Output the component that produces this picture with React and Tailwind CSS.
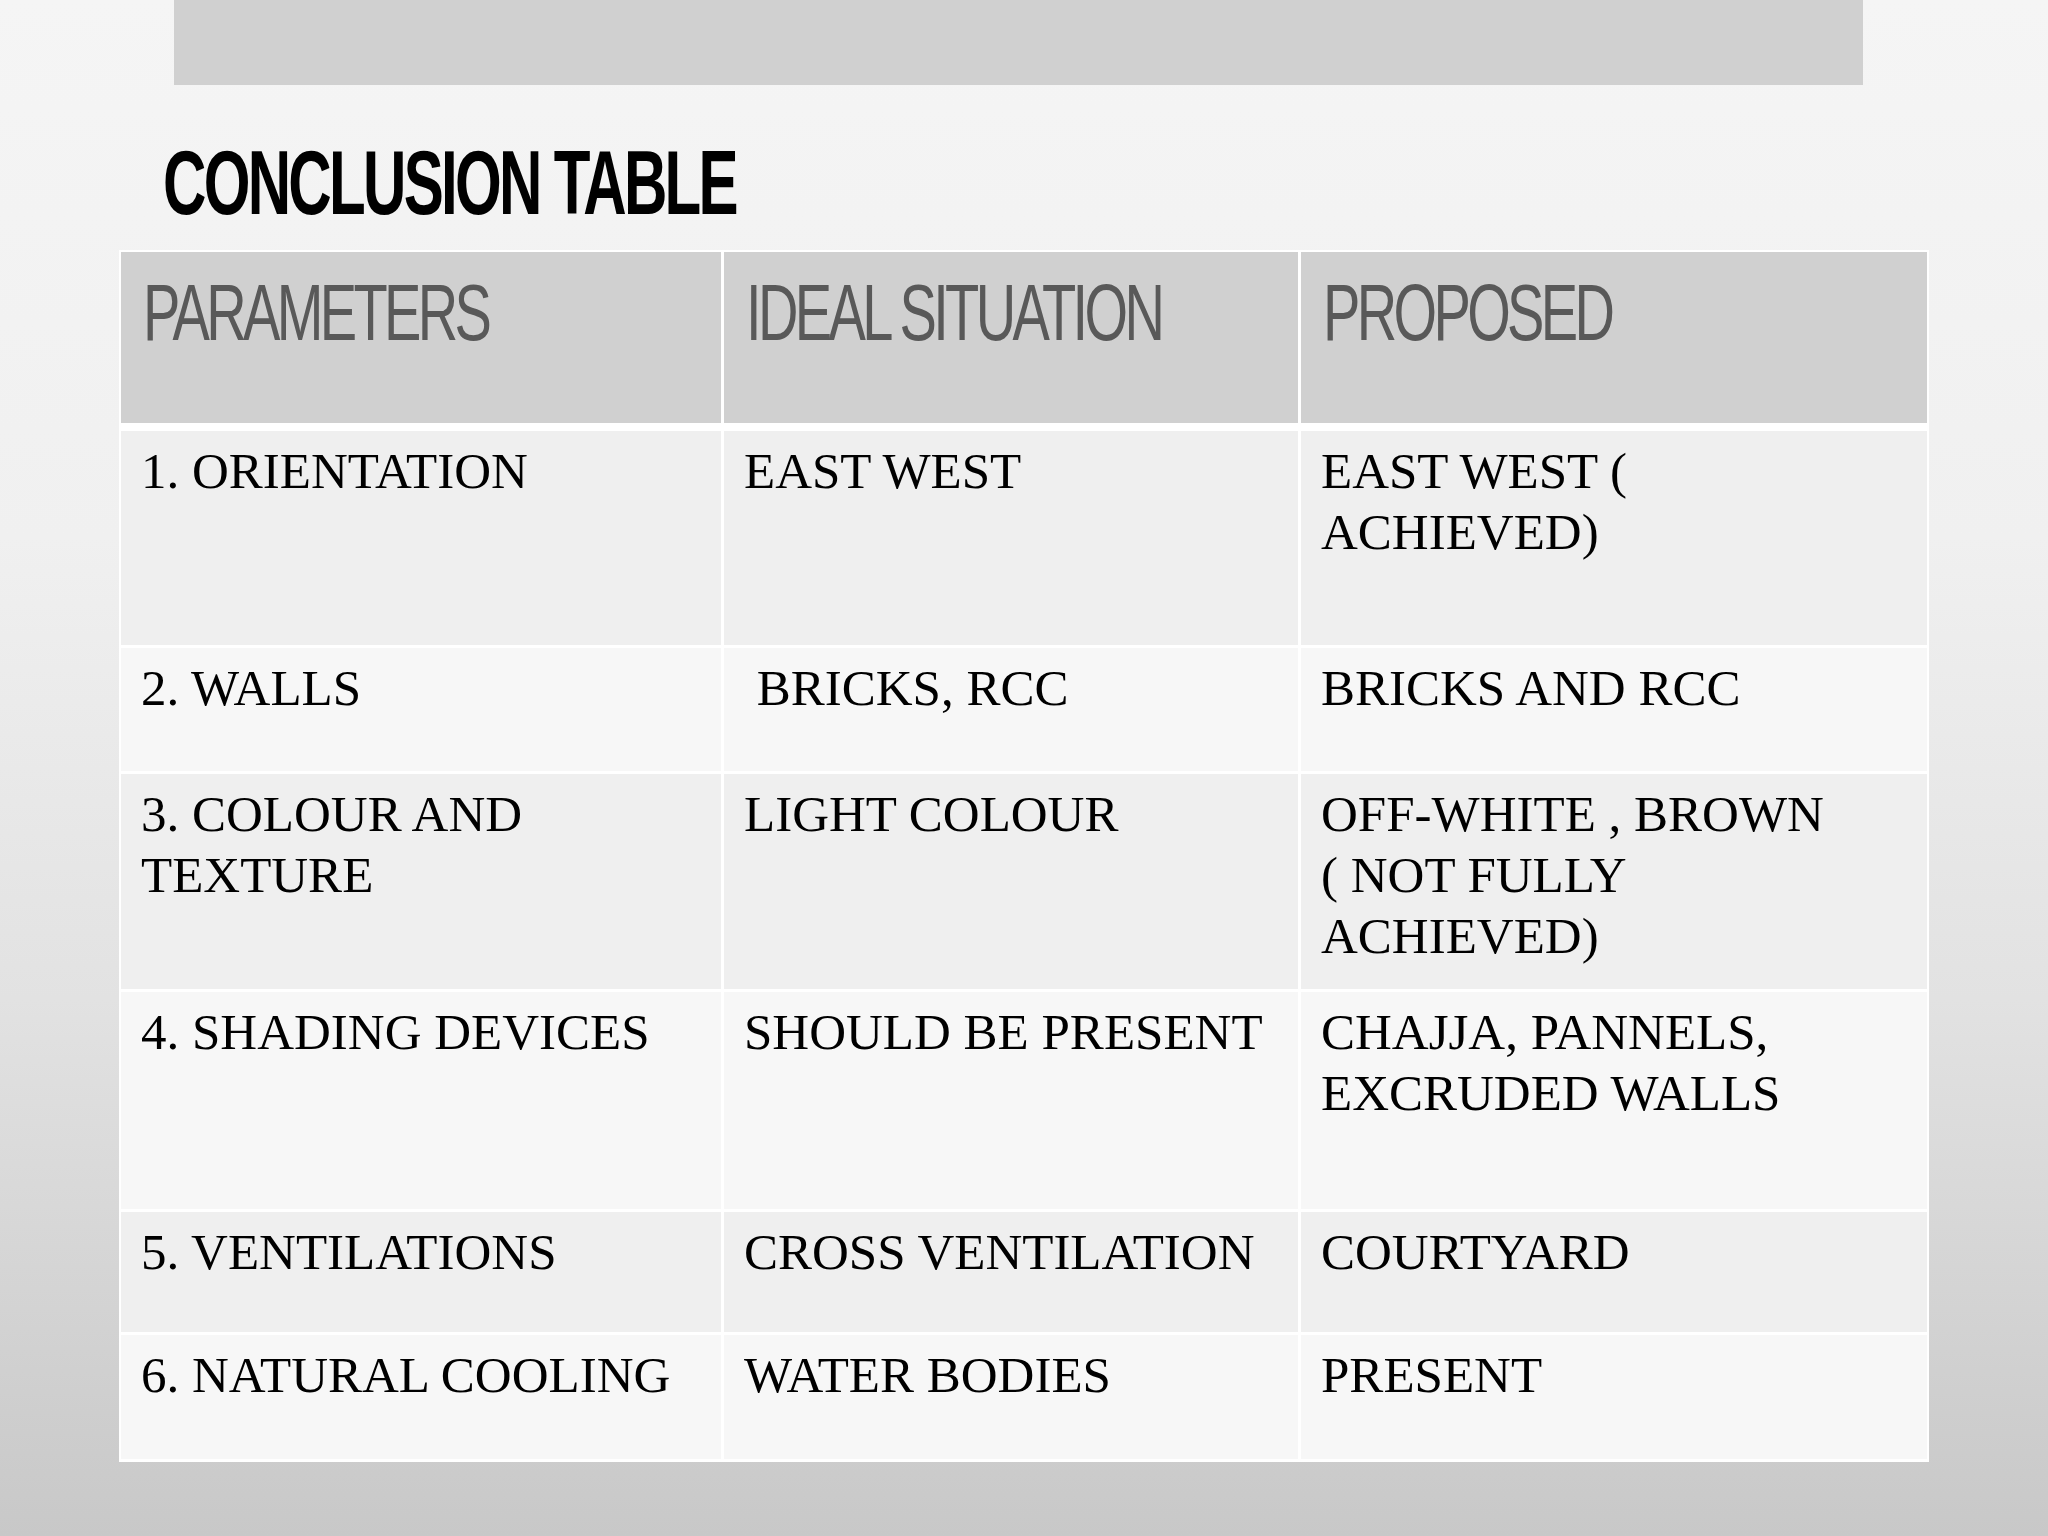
import React from 'react';

const rows = [
  { h: 'h-[214px]', bg: 'bg-[#efefef]', cells: [['1. ORIENTATION'], ['EAST WEST'], ['EAST WEST (', 'ACHIEVED)']] },
  { h: 'h-[123px]', bg: 'bg-[#f7f7f7]', cells: [['2. WALLS'], ['\u00a0BRICKS, RCC'], ['BRICKS AND RCC']] },
  { h: 'h-[215px]', bg: 'bg-[#efefef]', cells: [['3. COLOUR AND', 'TEXTURE'], ['LIGHT COLOUR'], ['OFF-WHITE , BROWN', '( NOT FULLY', 'ACHIEVED)']] },
  { h: 'h-[217px]', bg: 'bg-[#f7f7f7]', cells: [['4. SHADING DEVICES'], ['SHOULD BE PRESENT'], ['CHAJJA, PANNELS,', 'EXCRUDED WALLS']] },
  { h: 'h-[120px]', bg: 'bg-[#efefef]', cells: [['5. VENTILATIONS'], ['CROSS VENTILATION'], ['COURTYARD']] },
  { h: 'h-[124px]', bg: 'bg-[#f7f7f7]', cells: [['6. NATURAL COOLING'], ['WATER BODIES'], ['PRESENT']] },
];

const headers = ['PARAMETERS', 'IDEAL SITUATION', 'PROPOSED'];

const App = () => {
  return (
    <div className="w-[2048px] h-[1536px] overflow-hidden bg-[linear-gradient(to_bottom,#f5f5f5_0%,#f0f0f0_35%,#e2e2e2_65%,#c8c8c8_100%)]">
      {/* empty title bar */}
      <div className="ml-[174px] w-[1689px] h-[85px] bg-[#d0d0d0]" />

      <div className="mt-[52px] ml-[163px] h-[91px]">
        <span className="inline-block origin-left scale-x-[0.66] whitespace-nowrap font-['Liberation_Sans',Arial,sans-serif] font-bold text-[91px] leading-[91px] tracking-[-0.045em] text-black">
          CONCLUSION TABLE
        </span>
      </div>

      <div className="mt-[22px] ml-[119px] w-[1810px] bg-white p-[2px] pb-[3px] flex flex-col gap-y-[3px]">
        <div className="grid grid-cols-[600px_574px_626px] gap-x-[3px] h-[171px] mb-[5px]">
          {headers.map((t) => (
            <div key={t} className="bg-[#d0d0d0] pl-[22px] pt-[21px]">
              <span className="inline-block origin-left scale-x-[0.7] whitespace-nowrap font-['Liberation_Sans',Arial,sans-serif] text-[80px] leading-[80px] tracking-[-0.065em] text-[#595959]">
                {t}
              </span>
            </div>
          ))}
        </div>

        {rows.map((r, i) => (
          <div key={i} className={`grid grid-cols-[600px_574px_626px] gap-x-[3px] ${r.h}`}>
            {r.cells.map((lines, j) => (
              <div key={j} className={`${r.bg} pl-[20px] pt-[10px] font-['Liberation_Serif','Times_New_Roman',serif] text-[51px] leading-[61px] text-black`}>
                {lines.map((l) => (
                  <div key={l} className="whitespace-pre">{l}</div>
                ))}
              </div>
            ))}
          </div>
        ))}
      </div>
    </div>
  );
};

export default App;
